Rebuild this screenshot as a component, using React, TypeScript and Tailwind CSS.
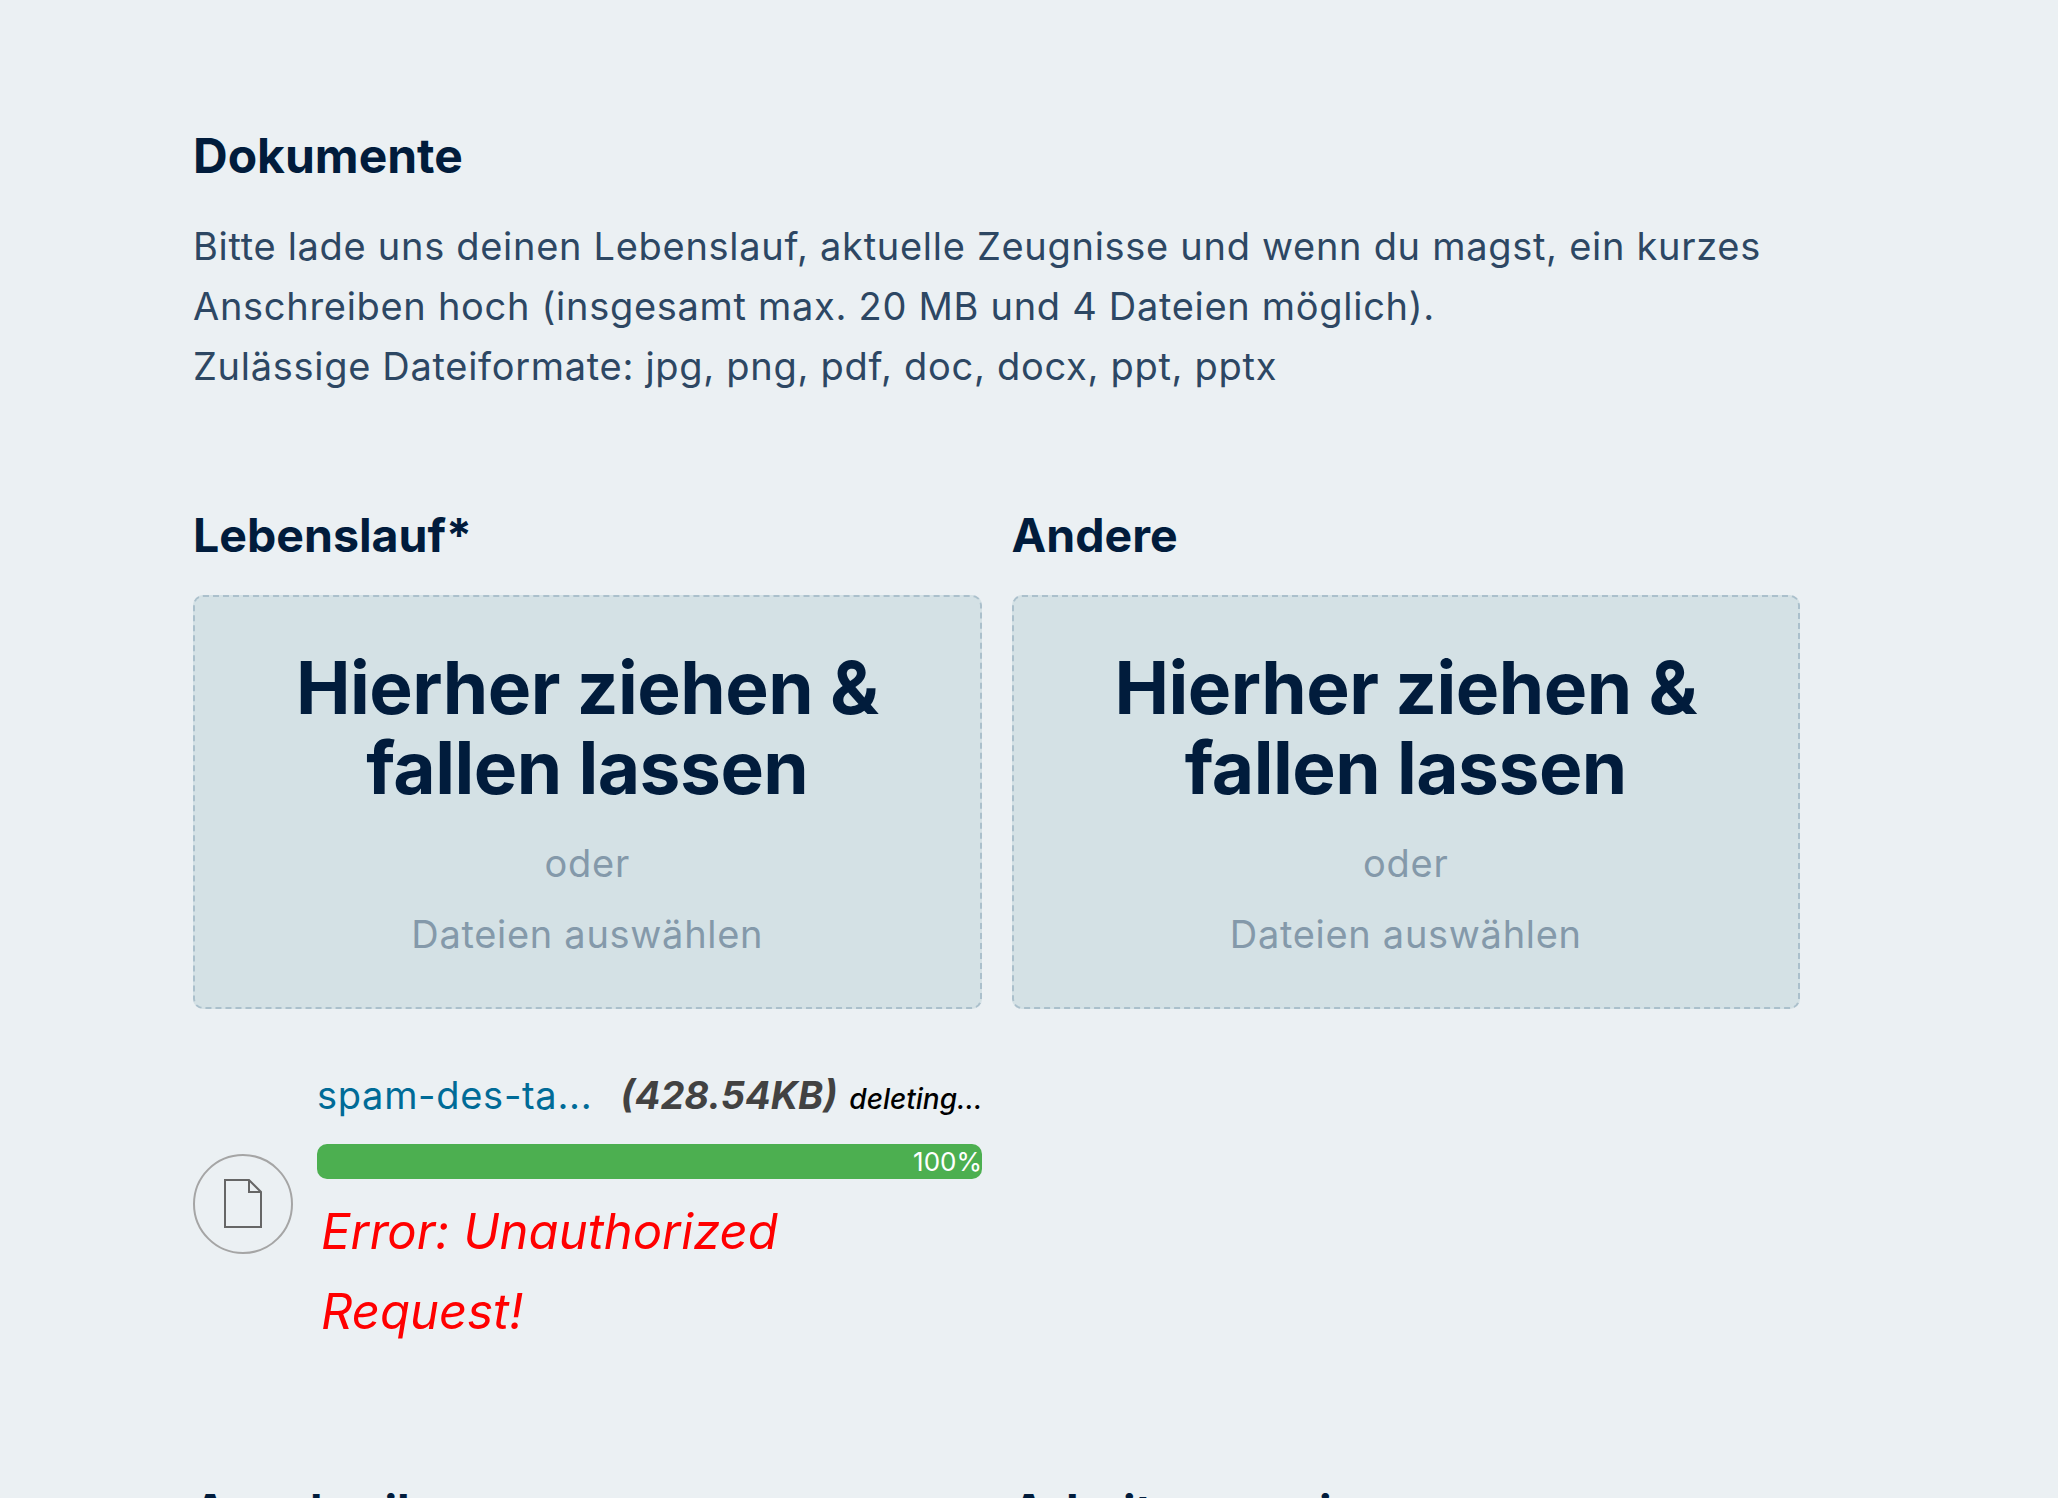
import { FC } from "react";

const Dropzone: FC<{ label: string }> = ({ label }) => (
  <div>
    <h3 className="text-[46.5px] leading-[60px] font-bold text-[#011c3c]">{label}</h3>
    <div className="mt-[30px] flex h-[414px] flex-col items-center rounded-[10px] border-2 border-dashed border-[#abc0cc] bg-[#d4e1e5] pt-[51px]">
      <div className="text-center text-[73px] leading-[80px] font-bold tracking-[-0.5px] text-[#011c3c]">
        Hierher ziehen &<br />
        fallen lassen
      </div>
      <div className="mt-[25px] text-[38px] leading-[60px] tracking-[0.7px] text-[#8499aa]">oder</div>
      <div className="mt-[11px] text-[38px] leading-[60px] tracking-[0.7px] text-[#8499aa]">Dateien auswählen</div>
    </div>
  </div>
);

const App: FC = () => (
  <div className="h-[1498px] overflow-hidden bg-[#ebf0f3] pt-[126px] pl-[193px] font-['Inter',sans-serif]">
    <h2 className="text-[48px] leading-[60px] font-bold text-[#011c3c]">Dokumente</h2>
    <p className="mt-[30px] w-[1620px] text-[38px] leading-[60px] tracking-[0.7px] text-[#2d4763]">
      Bitte lade uns deinen Lebenslauf, aktuelle Zeugnisse und wenn du magst, ein kurzes
      <br />
      Anschreiben hoch (insgesamt max. 20 MB und 4 Dateien möglich).
      <br />
      Zulässige Dateiformate: jpg, png, pdf, doc, docx, ppt, pptx
    </p>

    <div className="mt-[109px] grid w-[1607px] grid-cols-2 gap-[30px]">
      <Dropzone label="Lebenslauf*" />
      <Dropzone label="Andere" />
    </div>

    <div className="mt-[56px] flex w-[789px] items-center gap-6">
      <div className="mb-[10px] flex h-[100px] w-[100px] shrink-0 items-center justify-center rounded-full border-2 border-[#a5a5a5]">
        <svg width="38" height="49" viewBox="0 0 38 49" fill="none" stroke="#666" strokeWidth="2">
          <path d="M1 1h24l12 12v35H1z" />
          <path d="M25 1v12h12" />
        </svg>
      </div>
      <div className="min-w-0 flex-1">
        <div className="flex items-baseline whitespace-nowrap">
          <span className="text-[38px] leading-[60px] tracking-[0.7px] text-[#006b97]">spam-des-ta...</span>
          <span className="ml-[28px] text-[38px] leading-[60px] font-bold text-[#424242] italic">(428.54KB)</span>
          <span className="ml-3 text-[28px] font-medium text-black italic">deleting...</span>
        </div>
        <div className="mt-[19px] h-[35px] rounded-[10px] bg-[#4caf50] text-right text-[26px] leading-[35px] text-white">
          100%
        </div>
        <p className="mt-[13px] ml-1 text-[49px] leading-[80px] text-[#ff0000] italic">
          Error: Unauthorized
          <br />
          Request!
        </p>
      </div>
    </div>

    <div className="mt-[129px] grid w-[1607px] grid-cols-2 gap-[30px]">
      <h3 className="text-[46.5px] leading-[60px] font-bold text-[#011c3c]">Anschreiben</h3>
      <h3 className="text-[46.5px] leading-[60px] font-bold text-[#011c3c]">Arbeitszeugnis</h3>
    </div>
  </div>
);

export default App;
